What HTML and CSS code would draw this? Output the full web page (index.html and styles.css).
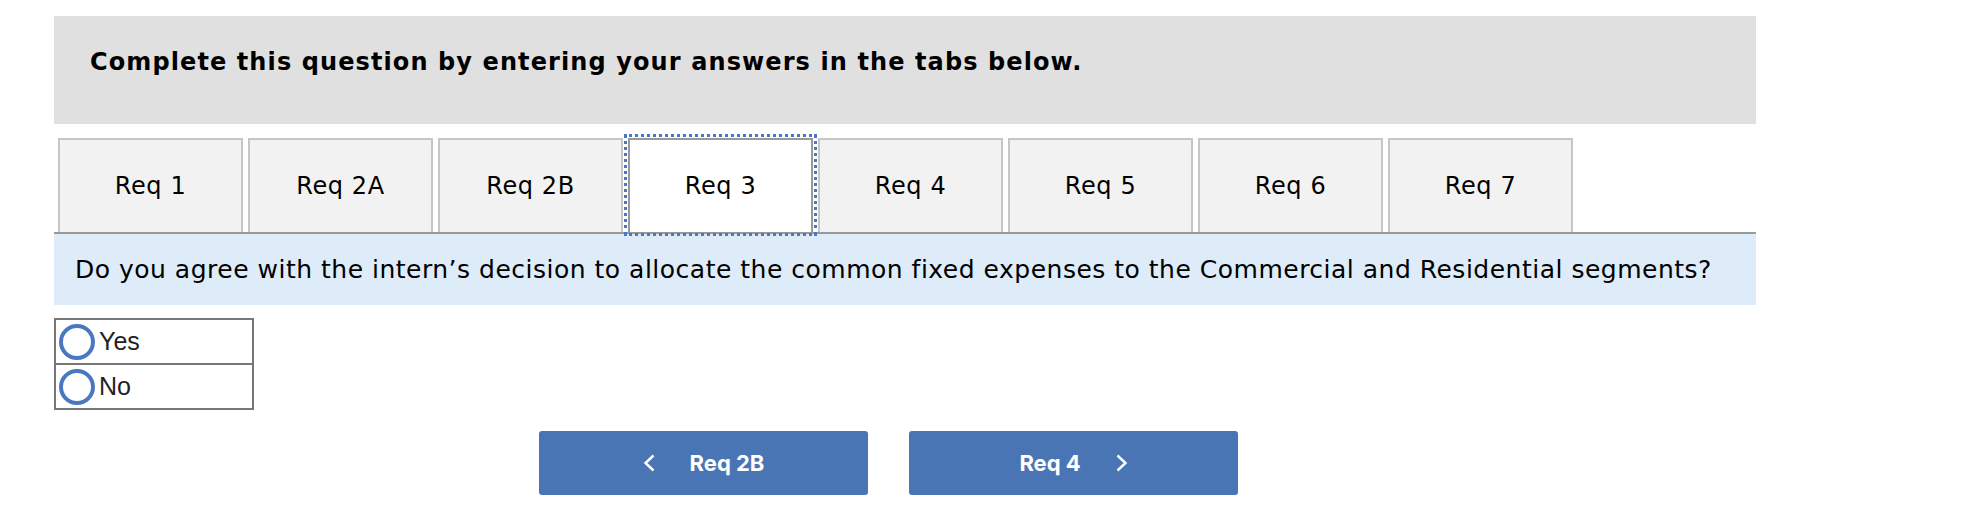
FILE: index.html
```html
<!DOCTYPE html>
<html>
<head>
  <title>Req 3</title>
  <link rel="stylesheet" href="styles.css">
</head>
<body>
  <div class="question-container">
    <div class="question-header">
      <h2>Complete this question by entering your answers in the tabs below.</h2>
    </div>

    <ul class="req-tabs">
      <li class="req-tab">Req 1</li>
      <li class="req-tab">Req 2A</li>
      <li class="req-tab">Req 2B</li>
      <li class="req-tab active">Req 3</li>
      <li class="req-tab">Req 4</li>
      <li class="req-tab">Req 5</li>
      <li class="req-tab">Req 6</li>
      <li class="req-tab">Req 7</li>
    </ul>

    <div class="req-prompt">
      Do you agree with the intern’s decision to allocate the common fixed expenses to the Commercial and Residential segments?
    </div>

    <table class="choice-table">
      <tr>
        <td><label class="choice"><span class="radio"></span>Yes</label></td>
      </tr>
      <tr>
        <td><label class="choice"><span class="radio"></span>No</label></td>
      </tr>
    </table>

    <div class="req-nav">
      <button class="nav-button">
        <svg class="chevron" width="12" height="18" viewBox="0 0 12 18"><path d="M10.5 1.5 L2.5 9 L10.5 16.5" fill="none" stroke="#fff" stroke-width="2.4"/></svg>
        <span>Req 2B</span>
      </button>
      <button class="nav-button">
        <span>Req 4</span>
        <svg class="chevron" width="12" height="18" viewBox="0 0 12 18"><path d="M1.5 1.5 L9.5 9 L1.5 16.5" fill="none" stroke="#fff" stroke-width="2.4"/></svg>
      </button>
    </div>
  </div>
</body>
</html>
```

FILE: styles.css
```css
body {
  margin: 0;
  padding: 0;
  background-color: #fff;
  font-family: "DejaVu Sans", Verdana, sans-serif;
  color: #000;
}

.question-container {
  width: 1702px;
  margin-left: 54px;
  padding-top: 16px;
}

.question-header {
  height: 108px;
  background-color: #e0e0e0;
  padding: 31px 0 0 36px;
  box-sizing: border-box;
}

.question-header h2 {
  margin: 0;
  font-size: 24px;
  line-height: 30px;
  letter-spacing: 1.1px;
  font-weight: bold;
}

.req-tabs {
  list-style: none;
  margin: 14px 0 0;
  padding: 0 0 0 4px;
  display: flex;
  gap: 5px;
  border-bottom: 2px solid #999;
}

.req-tab {
  width: 185px;
  height: 94px;
  box-sizing: border-box;
  border: 2px solid #c6c6c6;
  border-bottom: none;
  background-color: #f2f2f2;
  display: flex;
  align-items: center;
  justify-content: center;
  font-size: 24px;
  letter-spacing: 0.6px;
}

.req-tab.active {
  background-color: #fff;
  border-color: #999;
  outline: 3px dotted #4a78c2;
  outline-offset: 1px;
}

.req-prompt {
  height: 71px;
  background-color: #deebf8;
  padding-left: 21px;
  display: flex;
  align-items: center;
  font-size: 25px;
  letter-spacing: 0.5px;
}

.choice-table {
  margin-top: 13px;
  width: 200px;
  border-collapse: collapse;
  font-family: "Liberation Sans", Arial, sans-serif;
  font-size: 25px;
  color: #222;
}

.choice-table td {
  border: 2px solid #777;
  height: 43px;
  padding: 0 0 0 3px;
}

.choice {
  display: flex;
  align-items: center;
  gap: 4px;
}

.radio {
  width: 28px;
  height: 28px;
  border: 4.5px solid #4a78c0;
  border-radius: 50%;
}

.req-nav {
  display: flex;
  gap: 41px;
  margin-top: 21px;
  padding-left: 485px;
}

.nav-button {
  width: 329px;
  height: 64px;
  border: none;
  border-radius: 3px;
  background-color: #4a75b5;
  color: #fff;
  font-family: Inter, "Liberation Sans", sans-serif;
  font-weight: bold;
  font-size: 22px;
  display: flex;
  align-items: center;
  justify-content: center;
  gap: 35px;
  cursor: pointer;
}
```
